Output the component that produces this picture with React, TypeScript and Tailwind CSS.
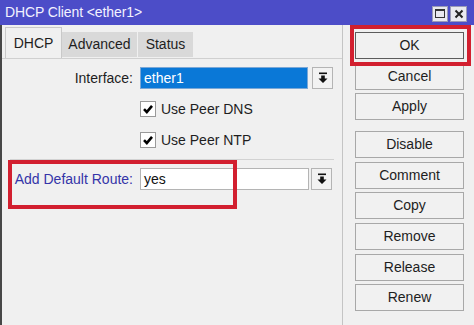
import React from "react"

const font = "font-['Liberation_Sans','Arial',sans-serif]"

function DropIcon() {
  return (
    <svg width="10" height="12" viewBox="0 0 10 12">
      <rect x="1" y="0.5" width="8" height="1.6" fill="#111" />
      <path d="M3.2 3.5 H6.8 V6.5 H9.5 L5 11 L0.5 6.5 H3.2 Z" fill="#111" />
    </svg>
  )
}

function DropBtn() {
  return (
    <div className="w-[21px] h-[22px] border border-[#b4b4b4] bg-[#f2f2f2] flex items-center justify-center">
      <DropIcon />
    </div>
  )
}

function Check({ label, className }: { label: string; className?: string }) {
  return (
    <div className={"flex items-center gap-[5px] pl-[138px] " + (className ?? "")}>
      <div className="w-[16px] h-[16px] bg-white border border-[#9a9a9a] flex items-center justify-center">
        <svg width="12" height="12" viewBox="0 0 12 12">
          <path d="M2 6.2 L4.8 9 L10 2.8" stroke="#000" strokeWidth="2.6" fill="none" />
        </svg>
      </div>
      <span className="text-[14px] text-[#1e1e1e] leading-none">{label}</span>
    </div>
  )
}

const buttons = ["Disable", "Comment", "Copy", "Remove", "Release", "Renew"]

function Btn({ label, strong }: { label: string; strong?: boolean }) {
  return (
    <div
      className={
        "w-[109px] h-[27px] flex items-center justify-center bg-[#f1f1f1] text-[14px] text-[#1e1e1e] border " +
        (strong ? "border-[#5c5c5c]" : "border-[#a8a8a8]")
      }
    >
      {label}
    </div>
  )
}

export default function App() {
  return (
    <div className={"relative w-[474px] h-[325px] bg-[#f0f0f0] flex flex-col overflow-hidden " + font}>
      {/* Title bar */}
      <div className="h-[25px] bg-[#4c4dc8] flex items-center pl-[5px] pr-[7px] shrink-0">
        <span className="text-[14px] text-[#f2f2ff] tracking-[-0.1px]">DHCP Client &lt;ether1&gt;</span>
        <div className="ml-auto flex gap-[2px] mt-[2px]">
          <div className="w-[16px] h-[16px] bg-[#e9e9ef] border border-[#9a9ab8] flex items-center justify-center">
            <div className="w-[10px] h-[9px] border border-[#333] border-t-2" />
          </div>
          <div className="w-[17px] h-[16px] bg-[#e9e9ef] border border-[#9a9ab8] flex items-center justify-center">
            <svg width="10" height="10" viewBox="0 0 10 10">
              <path d="M1.5 1.5 L8.5 8.5 M8.5 1.5 L1.5 8.5" stroke="#222" strokeWidth="2" />
            </svg>
          </div>
        </div>
      </div>

      <div className="flex flex-1 border-l-[2px] border-[#474747]">
        {/* Left: tabs + panel */}
        <div className="w-[341px] flex flex-col border-r border-[#c4c4c4]">
          <div className="flex items-end pl-[3px] pt-[2px] h-[33px]">
            <div className="w-[57px] h-[31px] border border-b-0 border-[#c9c9c9] bg-[#f0f0f0] flex items-center justify-center text-[14px] text-[#1e1e1e]">
              DHCP
            </div>
            <div className="w-[75px] h-[25px] mb-[1px] bg-[#d9d9d9] flex items-center justify-center text-[14px] text-[#1e1e1e]">
              Advanced
            </div>
            <div className="w-[56px] h-[25px] mb-[1px] bg-[#d9d9d9] border-l border-[#f0f0f0] flex items-center justify-center text-[14px] text-[#1e1e1e]">
              Status
            </div>
          </div>
          <div className="flex-1 border-t border-[#d0d0d0] flex flex-col">
            {/* Interface */}
            <div className="flex items-center mt-[8px] h-[22px]">
              <div className="w-[131px] text-right text-[14px] text-[#1e1e1e]">Interface:</div>
              <div className="ml-[7px] w-[168px] h-[22px] bg-[#0a78d7] border border-[#7aa7d6] flex items-center pl-[3px] text-[14px] text-white">
                ether1
              </div>
              <div className="ml-[4px]">
                <DropBtn />
              </div>
            </div>
            <Check label="Use Peer DNS" className="mt-[12px]" />
            <Check label="Use Peer NTP" className="mt-[15px]" />
            <div className="mt-[11px] ml-[8px] mr-[8px] h-[1px] bg-[#d2d2d2]" />
            {/* Add Default Route */}
            <div className="flex items-center mt-[8px] h-[22px]">
              <div className="w-[131px] text-right text-[14px] text-[#3434a8]">Add Default Route:</div>
              <div className="ml-[7px] w-[169px] h-[22px] bg-white border border-[#b4b4b4] flex items-center pl-[3px] text-[14px] text-[#111]">
                yes
              </div>
              <div className="ml-[2px]">
                <DropBtn />
              </div>
            </div>
          </div>
        </div>

        {/* Right: buttons */}
        <div className="flex flex-col pl-[12px] pt-[7px]">
          <div className="flex flex-col gap-[3.6px]">
            <Btn label="OK" strong />
            <Btn label="Cancel" />
            <Btn label="Apply" />
          </div>
          <div className="flex flex-col gap-[3.6px] mt-[11px]">
            {buttons.map(b => <Btn key={b} label={b} />)}
          </div>
        </div>
      </div>

      {/* Annotation highlights */}
      <div className="absolute left-[350px] top-[25px] w-[121px] h-[41px] border-[4px] border-[#d21f2f]" />
      <div className="absolute left-[8px] top-[160px] w-[229px] h-[49px] border-[4px] border-[#d21f2f]" />
    </div>
  )
}
